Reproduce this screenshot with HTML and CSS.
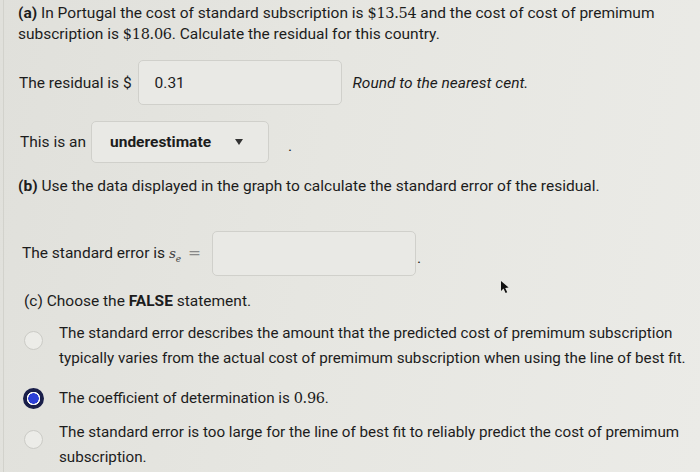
FILE: index.html
```html
<!DOCTYPE html>
<html>
<head>
<meta charset="utf-8">
<link rel="stylesheet" href="styles.css">
</head>
<body>
<div class="page">
  <p class="intro"><b class="part">(a)</b> In Portugal the cost of standard subscription is <span class="math">$13.54</span> and the cost of cost of premimum subscription is <span class="math">$18.06</span>. Calculate the residual for this country.</p>

  <div class="row row-residual">
    <span class="label">The residual is $</span>
    <div class="input input-residual">0.31</div>
    <span class="hint">Round to the nearest cent.</span>
  </div>

  <div class="row row-select">
    <span class="label">This is an</span>
    <div class="select">
      <span class="select-value">underestimate</span>
      <span class="caret"></span>
    </div>
    <span class="dot">.</span>
  </div>

  <p class="part-b"><b class="part">(b)</b> Use the data displayed in the graph to calculate the standard error of the residual.</p>

  <div class="row row-se">
    <span class="label">The standard error is <span class="math-i">s<sub>e</sub></span> <span class="eq">=</span></span>
    <div class="input input-se"></div>
    <span class="dot">.</span>
    <span class="cursor">
      <svg width="10" height="14" viewBox="0 0 10 14"><path d="M1 1 L1 11 L3.5 8.6 L5.6 13 L7.2 12.2 L5.2 8 L8.6 7.6 Z" fill="#111"/></svg>
    </span>
  </div>

  <p class="part-c">(c) Choose the <b>FALSE</b> statement.</p>

  <ul class="options">
    <li class="option">
      <span class="radio"></span>
      <span class="option-text">The standard error describes the amount that the predicted cost of premimum subscription typically varies from the actual cost of premimum subscription when using the line of best fit.</span>
    </li>
    <li class="option option-single">
      <span class="radio radio-on"></span>
      <span class="option-text">The coefficient of determination is <span class="math">0.96</span>.</span>
    </li>
    <li class="option">
      <span class="radio"></span>
      <span class="option-text">The standard error is too large for the line of best fit to reliably predict the cost of premimum subscription.</span>
    </li>
  </ul>
</div>
</body>
</html>
```

FILE: styles.css
```css
html, body {
  margin: 0;
  padding: 0;
}
body {
  width: 700px;
  height: 472px;
  overflow: hidden;
  background: linear-gradient(100deg, #e0e0db 0%, #e6e6e1 45%, #ebebe7 100%);
  font-family: Roboto, "Liberation Sans", sans-serif;
  font-size: 15.5px;
  color: #1c1c1c;
}
.page {
  position: relative;
  padding: 3px 0 0 14px;
  border-left: 1px solid #d2d2cc;
  margin-left: 3px;
  height: 469px;
}
.intro {
  margin: 0;
  width: 650px;
  line-height: 21px;
}
.part {
  font-weight: 700;
}
.math {
  font-family: "DejaVu Serif", "Liberation Serif", serif;
  font-size: 14.5px;
  letter-spacing: -0.3px;
}
.row {
  display: flex;
  align-items: center;
}
.row-residual {
  margin-top: 15px;
  padding-left: 1px;
}
.input {
  box-sizing: border-box;
  border: 1.5px solid #d0d0cb;
  border-radius: 5px;
  background: #e9e9e5;
}
.input-residual {
  width: 204px;
  height: 45px;
  margin-left: 6px;
  padding-left: 16px;
  display: flex;
  align-items: center;
}
.hint {
  font-style: italic;
  margin-left: 11px;
}
.row-select {
  margin-top: 16px;
  padding-left: 2px;
}
.select {
  box-sizing: border-box;
  width: 178px;
  height: 42px;
  margin-left: 5px;
  border: 1.5px solid #d0d0cb;
  border-radius: 5px;
  background: #e9e9e5;
  display: flex;
  align-items: center;
  padding-left: 18px;
}
.select-value {
  font-weight: 700;
}
.caret {
  width: 0;
  height: 0;
  border-left: 4px solid transparent;
  border-right: 4px solid transparent;
  border-top: 6px solid #333;
  margin-left: 24px;
}
.dot {
  margin-left: 19px;
  margin-top: 8px;
}
.part-b {
  margin: 13px 0 0 0;
  line-height: 21px;
}
.row-se {
  margin-top: 34px;
  padding-left: 4px;
}
.math-i {
  font-family: "DejaVu Serif", "Liberation Serif", serif;
  font-style: italic;
  font-size: 13.5px;
  color: #444;
}
.math-i sub {
  font-size: 9px;
}
.eq {
  font-family: "DejaVu Serif", serif;
  color: #888;
  margin-left: 3px;
}
.input-se {
  width: 204px;
  height: 45px;
  margin-left: 11px;
}
.row-se .dot {
  margin-left: 1px;
  margin-top: 8px;
}
.cursor {
  position: absolute;
  left: 496px;
  top: 280px;
  line-height: 0;
}
.part-c {
  margin: 15px 0 0 6px;
  line-height: 21px;
}
.options {
  list-style: none;
  margin: 9px 0 0 0;
  padding: 0;
  font-size: 15.2px;
}
.option {
  display: flex;
  align-items: flex-start;
  line-height: 25px;
  margin-bottom: 15px;
}
.option-single {
  margin-bottom: 9px;
}
.radio {
  box-sizing: border-box;
  flex: none;
  width: 19px;
  height: 19px;
  border-radius: 50%;
  border: 1.5px solid #cbcbc6;
  background: #ececE8;
  margin: 10px 0 0 6px;
}
.radio-on {
  border: 2px solid #1a1f4a;
  background: radial-gradient(circle, #2c3fd6 0 5px, #f4f4f4 5.5px 6.5px, #1a1f4a 7px);
  width: 21px;
  height: 21px;
  margin: 2px 0 0 5px;
}
.option-text {
  margin-left: 16px;
  width: 640px;
}
.option-single .option-text {
  margin-left: 15px;
}
```
